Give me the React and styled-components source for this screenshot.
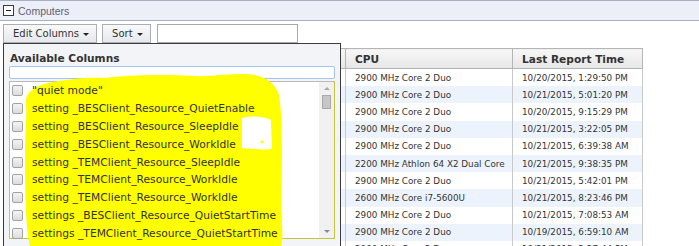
import React from 'react';
import styled, { createGlobalStyle } from 'styled-components';

const GlobalStyle = createGlobalStyle`
    html, body{
        margin:0;
        padding:0;
        background:#fff;
    }
    body{
        font-family:"DejaVu Sans", Verdana, sans-serif;
        color:#333;
        width:699px;
        height:246px;
        overflow:hidden;
    }
`;

const columns = [
    '"quiet mode"',
    'setting _BESClient_Resource_QuietEnable',
    'setting _BESClient_Resource_SleepIdle',
    'setting _BESClient_Resource_WorkIdle',
    'setting _TEMClient_Resource_SleepIdle',
    'setting _TEMClient_Resource_WorkIdle',
    'setting _TEMClient_Resource_WorkIdle',
    'settings _BESClient_Resource_QuietStartTime',
    'settings _TEMClient_Resource_QuietStartTime',
];

const rows = [
    ['2900 MHz Core 2 Duo', '10/20/2015, 1:29:50 PM'],
    ['2900 MHz Core 2 Duo', '10/21/2015, 5:01:20 PM'],
    ['2900 MHz Core 2 Duo', '10/20/2015, 9:15:29 PM'],
    ['2900 MHz Core 2 Duo', '10/21/2015, 3:22:05 PM'],
    ['2900 MHz Core 2 Duo', '10/21/2015, 6:39:38 AM'],
    ['2200 MHz Athlon 64 X2 Dual Core', '10/21/2015, 9:38:35 PM'],
    ['2900 MHz Core 2 Duo', '10/21/2015, 5:42:01 PM'],
    ['2600 MHz Core i7-5600U', '10/21/2015, 8:23:46 PM'],
    ['2900 MHz Core 2 Duo', '10/21/2015, 7:08:53 AM'],
    ['2900 MHz Core 2 Duo', '10/19/2015, 6:59:10 AM'],
    ['2900 MHz Core 2 Duo', '10/21/2015, 2:27:44 PM'],
];

// freehand yellow marker drawn over the column list (page coordinates)
const Highlight = () => (
    <Marker width="340" height="210" viewBox="0 0 340 210">
        <g transform="translate(-4,-44)">
            <path
                fill="#ffff00"
                d="M27 106 C25 92 38 85 60 82 C80 79 92 78 106 79 C130 76 160 75 195 77 C205 78 215 76 240 75 C262 74 276 82 280 96 C284 120 283 170 282 200 C282 220 285 235 282 250 L32 250 C27 235 26 200 26 160 C26 130 28 118 27 106 Z"
            />
            <path fill="#fff" d="M243 119 C255 116 266 118 272 121 L273 150 C264 151 254 150 243 149 Z" />
            <circle cx="263" cy="143" r="1.5" fill="#ffff00" />
        </g>
    </Marker>
);

const App = () => {
    return (
        <Page>
            <GlobalStyle />
            <SectionHeader>
                <Toggle />
                <Title>Computers</Title>
            </SectionHeader>
            <Toolbar>
                <Button>Edit Columns<Caret /></Button>
                <Button>Sort<Caret /></Button>
                <Search />
            </Toolbar>
            <Body>
                <Popup>
                    <Highlight />
                    <PopupTitle>Available Columns</PopupTitle>
                    <Filter />
                    <ListBox>
                        <Items>
                            {columns.map((c, i) => (
                                <Item key={i}>
                                    <Check />
                                    <span>{c}</span>
                                </Item>
                            ))}
                        </Items>
                        <Scroll>
                            <Arrow />
                            <Thumb />
                            <Spacer />
                            <Arrow down />
                        </Scroll>
                    </ListBox>
                </Popup>
                <Table>
                    <colgroup>
                        <col style={{ width: 342 }} />
                        <col style={{ width: 167 }} />
                        <col style={{ width: 130 }} />
                    </colgroup>
                    <thead>
                        <tr>
                            <th></th>
                            <th>CPU</th>
                            <th>Last Report Time</th>
                        </tr>
                    </thead>
                    <tbody>
                        {rows.map((r, i) => (
                            <Row key={i} odd={i % 2 === 1}>
                                <td></td>
                                <td>{r[0]}</td>
                                <td>{r[1]}</td>
                            </Row>
                        ))}
                    </tbody>
                </Table>
            </Body>
        </Page>
    );
};

export default App;

const Page = styled.div`
    width:699px;
    height:246px;
    overflow:hidden;
`;

const SectionHeader = styled.div`
    height:19px;
    border-top:1px solid #a9b0c2;
    border-bottom:1px solid #a9b0c2;
    background:#eceef8;
    display:flex;
    align-items:center;
    padding-left:3px;
    gap:4px;
`;

const Toggle = styled.div`
    width:9px;
    height:9px;
    border:1px solid #3a3a3a;
    background:#fff;
    display:flex;
    align-items:center;
    justify-content:center;
    &:after{
        content:"";
        width:5px;
        height:1px;
        background:#222;
    }
`;

const Title = styled.div`
    font-family:"Liberation Sans", Arial, sans-serif;
    font-size:10.5px;
    color:#5b6478;
`;

const Toolbar = styled.div`
    display:flex;
    align-items:flex-start;
    height:19px;
    margin-top:3px;
    padding-left:3px;
    gap:5px;
`;

const Button = styled.div`
    height:19px;
    box-sizing:border-box;
    display:flex;
    align-items:center;
    gap:4px;
    padding:0 7px 0 9px;
    border:1px solid #a9aeb8;
    background:linear-gradient(#f9f9f9, #e6e8ec);
    font-size:10px;
    color:#333;
`;

const Caret = styled.span`
    width:0;
    height:0;
    border-left:3px solid transparent;
    border-right:3px solid transparent;
    border-top:3px solid #222;
    margin-top:1px;
`;

const Search = styled.input`
    width:141px;
    height:19px;
    box-sizing:border-box;
    border:1px solid #a9a9a9;
    margin:0 0 0 1px;
    padding:0;
    background:#fff;
`;

const Body = styled.div`
    position:relative;
    padding-top:5px;
`;

const Popup = styled.div`
    position:absolute;
    left:3px;
    top:0;
    width:338px;
    height:210px;
    border:1px solid #3c3c3c;
    background:#f3f4f8;
    padding:0 5px;
    box-sizing:border-box;
    z-index:5;
`;

const Marker = styled.svg`
    position:absolute;
    left:-1px;
    top:-1px;
    z-index:1;
`;

const PopupTitle = styled.div`
    font-weight:bold;
    font-size:10.6px;
    line-height:13px;
    padding:8px 0 0 1px;
    color:#333;
`;

const Filter = styled.div`
    height:13px;
    margin-top:1px;
    box-sizing:border-box;
    border:1px solid #a4c4ee;
    border-radius:2px;
    background:#fff;
`;

const ListBox = styled.div`
    margin-top:2px;
    height:158px;
    box-sizing:border-box;
    border:1px solid #b9b9b9;
    border-right-color:#c4c43c;
    border-bottom-color:#c4c43c;
    background:#fff;
    display:flex;
`;

const Items = styled.div`
    flex:1;
    position:relative;
    z-index:2;
`;

const Item = styled.div`
    height:17.8px;
    display:flex;
    align-items:center;
    gap:9px;
    padding-left:2px;
    font-size:10.7px;
    color:#333;
    white-space:nowrap;
`;

const Check = styled.span`
    width:11px;
    height:11px;
    box-sizing:border-box;
    border:1px solid #a2a2a2;
    border-radius:2px;
    background:linear-gradient(#f4f4f4, #dcdcdc);
    flex:none;
`;

const Scroll = styled.div`
    width:15px;
    background:#f1f1f1;
    display:flex;
    flex-direction:column;
    align-items:center;
    padding:2px 0;
    box-sizing:border-box;
    position:relative;
    z-index:2;
`;

const Arrow = styled.span`
    width:0;
    height:0;
    margin:3px 0;
    border-left:3px solid transparent;
    border-right:3px solid transparent;
    ${({ down }) => down ? 'border-top:3px solid #8a8a8a;' : 'border-bottom:3px solid #a8a8a8;'}
`;

const Thumb = styled.span`
    width:9px;
    height:14px;
    margin-top:2px;
    box-sizing:border-box;
    border:1px solid #a9a9a9;
    background:#c6c6c6;
`;

const Spacer = styled.span`
    flex:1;
`;

const Table = styled.table`
    border-collapse:collapse;
    table-layout:fixed;
    width:639px;
    margin-left:3px;
    border-right:1px solid #9c9c9c;
    th{
        height:19px;
        padding:0 9px;
        text-align:left;
        font-size:10.6px;
        font-weight:bold;
        color:#333;
        background:linear-gradient(#f7f7f7, #e6e6e6);
        border:1px solid #b5b5b5;
    }
    td{
        height:17.2px;
        padding:0 9px;
        font-size:8.8px;
        color:#333;
        white-space:nowrap;
        border-right:1px solid #c9c9c9;
    }
`;

const Row = styled.tr`
    background:${({ odd }) => odd ? '#edf3fc' : '#fff'};
`;
